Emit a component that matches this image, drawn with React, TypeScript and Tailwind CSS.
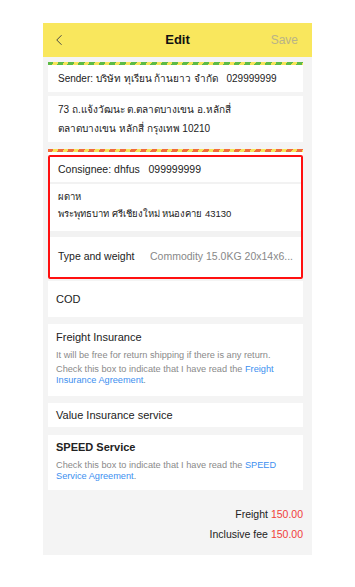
import { ChevronLeft } from 'lucide-react';

const font = { fontFamily: '"Liberation Sans", "Noto Sans", "DejaVu Sans", sans-serif' };

function Stripe({ color }: { color: 'green' | 'red' }) {
  return (
    <div
      className={`h-[3px] ${
        color === 'green'
          ? 'bg-[repeating-linear-gradient(120deg,#5dbb46_0_5px,#f7e45a_5px_9px)]'
          : 'bg-[repeating-linear-gradient(120deg,#f26b3a_0_5px,#f7e45a_5px_9px)]'
      }`}
    />
  );
}

export default function App() {
  return (
    <div className="w-[355px] h-[587px] bg-white pt-[23px] pl-[43px]" style={font}>
      <div className="w-[269px] flex flex-col">
        {/* 顶部栏 */}
        <div className="h-[34px] bg-[#f9e75d] flex items-center px-[7px] relative">
          <ChevronLeft className="w-[18px] h-[20px] text-[#444]" strokeWidth={1.3} />
          <div className="absolute left-0 right-0 text-center text-[13px] font-bold text-[#111] pointer-events-none">
            Edit
          </div>
          <div className="ml-auto pr-[7px] text-[12px] text-[#b8b388]">Save</div>
        </div>

        <div className="bg-[#f4f4f4] pl-[5px] pr-[9px] pt-[5px] pb-[11px] text-[#222]">
          {/* 寄件人 */}
          <Stripe color="green" />
          <div className="bg-white h-[27px] flex items-center px-[10px] text-[10px]">
            Sender: บริษัท ทุเรียน ก้านยาว จำกัด&nbsp;&nbsp;&nbsp;029999999
          </div>
          <div className="bg-white mt-[4px] px-[10px] py-[4px] text-[10px] leading-[19px]">
            <div>73 ถ.แจ้งวัฒนะ ต.ตลาดบางเขน อ.หลักสี่</div>
            <div>ตลาดบางเขน หลักสี่ กรุงเทพ 10210</div>
          </div>

          {/* 收件人 */}
          <div className="mt-[7px]">
            <Stripe color="red" />
            <div className="bg-white pt-[3px]">
              <div className="border-2 border-[#ff1010] rounded-[2px]">
                <div className="h-[25px] flex items-center px-[8px] text-[10.5px]">
                  Consignee: dhfus&nbsp;&nbsp;&nbsp;099999999
                </div>
                <div className="h-[2px] bg-[#f2f2f2]" />
                <div className="px-[8px] pt-[4px] pb-[9px] text-[9.5px] leading-[17px]">
                  <div>ผดาห</div>
                  <div>พระพุทธบาท ศรีเชียงใหม่ หนองคาย 43130</div>
                </div>
                <div className="h-[6px] bg-[#f2f2f2]" />
                <div className="h-[40px] flex items-center px-[8px] text-[10.5px]">
                  <span className="w-[92px] shrink-0">Type and weight</span>
                  <span className="text-[#888] truncate">Commodity 15.0KG 20x14x6...</span>
                </div>
              </div>
            </div>
          </div>

          {/* COD */}
          <div className="bg-white h-[36px] mt-[2px] flex items-center px-[8px] text-[11px]">COD</div>

          {/* 运费险 */}
          <div className="bg-white mt-[7px] px-[8px] pt-[6px] pb-[10px]">
            <div className="text-[11px] leading-[14px]">Freight Insurance</div>
            <div className="mt-[6px] text-[9.2px] leading-[11px] text-[#8a8a8a]">
              It will be free for return shipping if there is any return.
            </div>
            <div className="mt-[3px] text-[9.2px] leading-[11px] text-[#8a8a8a]">
              <div>
                Check this box to indicate that I have read the <span className="text-[#3d8ff0]">Freight</span>
              </div>
              <div>
                <span className="text-[#3d8ff0]">Insurance Agreement</span>.
              </div>
            </div>
          </div>

          {/* 保价 */}
          <div className="bg-white h-[24px] mt-[7px] flex items-center px-[8px] text-[11px]">
            Value Insurance service
          </div>

          {/* 极速 */}
          <div className="bg-white mt-[8px] px-[8px] pt-[5px] pb-[8px]">
            <div className="text-[11px] leading-[14px] font-bold">SPEED Service</div>
            <div className="mt-[6px] text-[9.2px] leading-[11px] text-[#8a8a8a]">
              <div>
                Check this box to indicate that I have read the <span className="text-[#3d8ff0]">SPEED</span>
              </div>
              <div>
                <span className="text-[#3d8ff0]">Service Agreement</span>.
              </div>
            </div>
          </div>

          {/* 费用 */}
          <div className="mt-[14px] flex flex-col items-end text-[10.5px] leading-[20px]">
            <div>
              Freight <span className="text-[#f0403a]">150.00</span>
            </div>
            <div>
              Inclusive fee <span className="text-[#f0403a]">150.00</span>
            </div>
          </div>
        </div>
      </div>
    </div>
  );
}
